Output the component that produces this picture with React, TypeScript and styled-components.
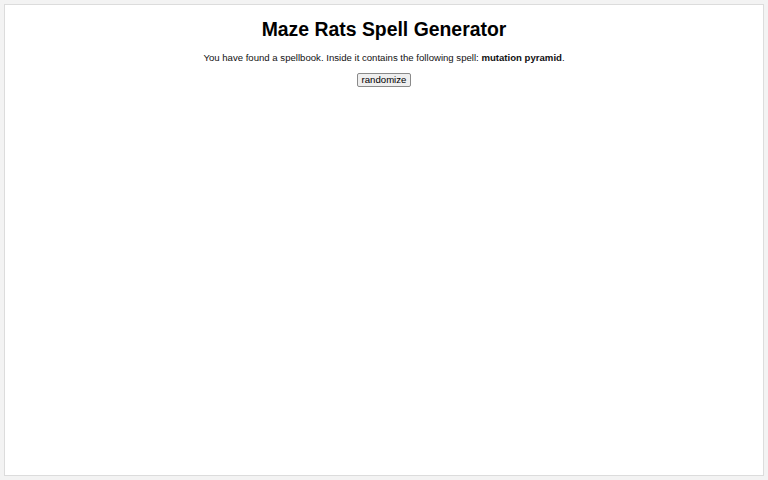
import React, { useState } from 'react';
import styled, { createGlobalStyle } from 'styled-components';

const GlobalStyle = createGlobalStyle`
  html, body {
    margin: 0;
    padding: 0;
    background: #f3f3f3;
    font-family: "Liberation Sans", Arial, sans-serif;
  }
`;

const Page = styled.div`
  height: 480px;
  padding: 4px;
  box-sizing: border-box;
`;

const Card = styled.div`
  height: 100%;
  box-sizing: border-box;
  background: #fff;
  border: 1px solid #dcdcdc;
  display: flex;
  flex-direction: column;
  align-items: center;
  padding-top: 13px;
`;

const Title = styled.h1`
  margin: 0;
  font-size: 19.4px;
  line-height: 22px;
  font-weight: bold;
  color: #000;
`;

const Text = styled.p`
  margin: 12px 0 0;
  font-size: 9.6px;
  line-height: 12px;
  color: #111;
`;

const Button = styled.button`
  margin-top: 9px;
  font-family: "Liberation Sans", Arial, sans-serif;
  font-size: 9.6px;
  line-height: 10px;
  padding: 1px 4px;
  background: #efefef;
  border: 1px solid #8a8a8a;
  border-radius: 2px;
  color: #000;
`;

const spells = ['mutation pyramid', 'acid mirror', 'burning hound', 'shadow gate'];

const App = () => {
  const [spell, setSpell] = useState(spells[0]);
  return (
    <>
      <GlobalStyle />
      <Page>
        <Card>
          <Title>Maze Rats Spell Generator</Title>
          <Text>
            You have found a spellbook. Inside it contains the following spell: <b>{spell}</b>.
          </Text>
          <Button onClick={() => setSpell(spells[Math.floor(Math.random() * spells.length)])}>
            randomize
          </Button>
        </Card>
      </Page>
    </>
  );
};

export default App;
